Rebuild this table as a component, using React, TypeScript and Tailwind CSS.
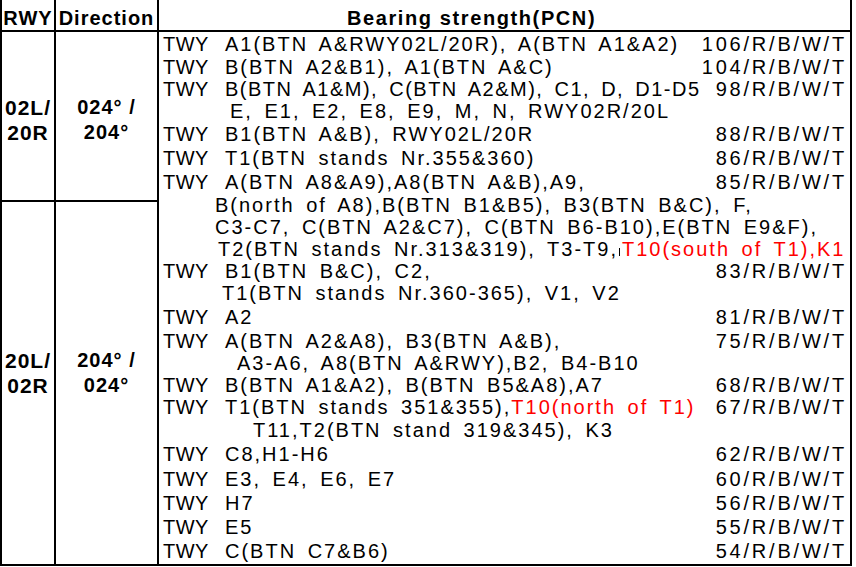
type Line = {
  h: string;
  text: string;
  twy?: boolean;
  indent?: string;
  tight?: boolean;
  red?: string;
  tick?: boolean;
  value?: string;
};

const lines: Line[] = [
  { h: "h-[24px]", twy: true, text: "A1(BTN A&RWY02L/20R), A(BTN A1&A2)", value: "106/R/B/W/T" },
  { h: "h-[22px]", twy: true, text: "B(BTN A2&B1), A1(BTN A&C)", value: "104/R/B/W/T" },
  { h: "h-[22px]", twy: true, tight: true, text: "B(BTN A1&M), C(BTN A2&M), C1, D, D1-D5", value: "98/R/B/W/T" },
  { h: "h-[22px]", indent: "pl-[71px]", text: "E, E1, E2, E8, E9, M, N, RWY02R/20L" },
  { h: "h-[24px]", twy: true, text: "B1(BTN A&B), RWY02L/20R", value: "88/R/B/W/T" },
  { h: "h-[24px]", twy: true, text: "T1(BTN stands Nr.355&360)", value: "86/R/B/W/T" },
  { h: "h-[24px]", twy: true, text: "A(BTN A8&A9),A8(BTN A&B),A9,", value: "85/R/B/W/T" },
  { h: "h-[22px]", indent: "pl-[56px]", text: "B(north of A8),B(BTN B1&B5), B3(BTN B&C), F," },
  { h: "h-[22px]", indent: "pl-[56px]", text: "C3-C7, C(BTN A2&C7), C(BTN B6-B10),E(BTN E9&F)," },
  { h: "h-[22px]", indent: "pl-[59px]", text: "T2(BTN stands Nr.313&319), T3-T9,", tick: true, red: "T10(south of T1),K1" },
  { h: "h-[21px]", twy: true, text: "B1(BTN B&C), C2,", value: "83/R/B/W/T" },
  { h: "h-[24px]", indent: "pl-[63px]", text: "T1(BTN stands Nr.360-365), V1, V2" },
  { h: "h-[24px]", twy: true, text: "A2", value: "81/R/B/W/T" },
  { h: "h-[23px]", twy: true, text: "A(BTN A2&A8), B3(BTN A&B),", value: "75/R/B/W/T" },
  { h: "h-[22px]", indent: "pl-[78px]", text: "A3-A6, A8(BTN A&RWY),B2, B4-B10" },
  { h: "h-[22px]", twy: true, text: "B(BTN A1&A2), B(BTN B5&A8),A7", value: "68/R/B/W/T" },
  { h: "h-[22px]", twy: true, text: "T1(BTN stands 351&355),", red: "T10(north of T1)", value: "67/R/B/W/T" },
  { h: "h-[24px]", indent: "pl-[94px]", text: "T11,T2(BTN stand 319&345), K3" },
  { h: "h-[24px]", twy: true, text: "C8,H1-H6", value: "62/R/B/W/T" },
  { h: "h-[25px]", twy: true, text: "E3, E4, E6, E7", value: "60/R/B/W/T" },
  { h: "h-[24px]", twy: true, text: "H7", value: "56/R/B/W/T" },
  { h: "h-[23px]", twy: true, text: "E5", value: "55/R/B/W/T" },
  { h: "h-[26px]", twy: true, text: "C(BTN C7&B6)", value: "54/R/B/W/T" },
];

function PcnLine({ line }: { line: Line }) {
  return (
    <div className={`${line.h} flex items-center whitespace-pre`}>
      {line.twy ? (
        <span className="w-[66px] shrink-0 pl-[4px] tracking-[0.5px]">TWY</span>
      ) : (
        <span className={line.indent} />
      )}
      <span className={line.tight ? "tracking-[1.5px]" : ""}>{line.text}</span>
      {line.tick && <span className="mt-[6px] ml-[1px] mr-[2px] inline-block h-[8px] w-px bg-black" />}
      {line.red && <span className="text-[#ff0000]">{line.red}</span>}
      {line.value && <span className="ml-auto shrink-0 pr-[3px] pl-[8px] tracking-[2.8px]">{line.value}</span>}
    </div>
  );
}

export default function App() {
  return (
    <div className="w-[856px] h-[567px] bg-white">
      <div className="w-[852px] h-[566px] flex flex-col border-l-2 border-r-2 border-b-2 border-black font-['Liberation_Sans',Arial,sans-serif] text-black">
        {/* header */}
        <div className="h-[32px] flex border-b-2 border-black font-bold text-[20px] tracking-[1px]">
          <div className="w-[54px] border-r-2 border-black flex items-center justify-center pt-[5px]">RWY</div>
          <div className="w-[103px] border-r-2 border-black flex items-center justify-center pt-[5px]">Direction</div>
          <div className="flex-1 flex items-center pl-[188px] pt-[5px] tracking-[1.6px]">Bearing strength(PCN)</div>
        </div>

        <div className="flex-1 flex">
          {/* runway / direction */}
          <div className="w-[157px] flex flex-col font-bold text-[20px] tracking-[1px] leading-[25px]">
            <div className="h-[170px] flex border-b-2 border-black">
              <div className="w-[54px] border-r-2 border-black flex flex-col items-center justify-center pt-[8px] text-[21px]">
                <span>02L/</span>
                <span>20R</span>
              </div>
              <div className="w-[103px] border-r-2 border-black flex flex-col items-center justify-center pt-[8px]">
                <span>024° /</span>
                <span>204°</span>
              </div>
            </div>
            <div className="flex-1 flex">
              <div className="w-[54px] border-r-2 border-black flex flex-col items-center justify-center pb-[20px] text-[21px]">
                <span>20L/</span>
                <span>02R</span>
              </div>
              <div className="w-[103px] border-r-2 border-black flex flex-col items-center justify-center pb-[20px]">
                <span>204° /</span>
                <span>024°</span>
              </div>
            </div>
          </div>

          {/* bearing strength */}
          <div className="flex-1 flex flex-col text-[20px] tracking-[2px] [word-spacing:4px] overflow-hidden">
            {lines.map((l, i) => (
              <PcnLine key={i} line={l} />
            ))}
          </div>
        </div>
      </div>
    </div>
  );
}
